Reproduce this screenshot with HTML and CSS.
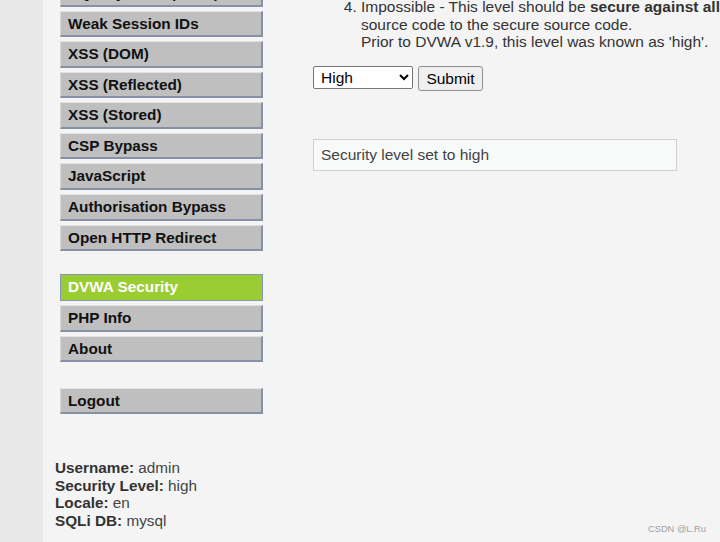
FILE: index.html
```html
<!DOCTYPE html>
<html>
<head>
<meta charset="utf-8">
<link rel="stylesheet" href="styles.css">
</head>
<body>
<div class="page">
  <div class="strip"></div>
  <div class="main">
    <div class="body-row">
      <div class="sidebar">
        <ul class="menu">
          <li><a>SQL Injection (Blind)</a></li>
          <li><a>Weak Session IDs</a></li>
          <li><a>XSS (DOM)</a></li>
          <li><a>XSS (Reflected)</a></li>
          <li><a>XSS (Stored)</a></li>
          <li><a>CSP Bypass</a></li>
          <li><a>JavaScript</a></li>
          <li><a>Authorisation Bypass</a></li>
          <li><a>Open HTTP Redirect</a></li>
        </ul>
        <ul class="menu menu-mid">
          <li class="selected"><a>DVWA Security</a></li>
          <li><a>PHP Info</a></li>
          <li><a>About</a></li>
        </ul>
        <ul class="menu">
          <li><a>Logout</a></li>
        </ul>
      </div>
      <div class="content">
        <ol class="levels" start="4">
          <li>Impossible - This level should be <b>secure against all vulnerabilities</b>. It is used to compare the vulnerable<br>source code to the secure source code.<br>Prior to DVWA v1.9, this level was known as 'high'.</li>
        </ol>
        <form class="sec-form">
          <select class="sel"><option>High</option></select>
          <button type="button" class="btn">Submit</button>
        </form>
        <div class="message">Security level set to high</div>
      </div>
    </div>
    <div class="info">
      <div><b>Username:</b> admin</div>
      <div><b>Security Level:</b> high</div>
      <div><b>Locale:</b> en</div>
      <div><b>SQLi DB:</b> mysql</div>
    </div>
  </div>
</div>
<div class="watermark">CSDN @L.Ru</div>
</body>
</html>
```

FILE: styles.css
```css
html, body {
  margin: 0;
  padding: 0;
  height: 100%;
  overflow: hidden;
}
body {
  font-family: "Liberation Sans", Arial, sans-serif;
  font-size: 15.3px;
  color: #333;
  background: #f4f4f4;
}
.page {
  display: flex;
  min-height: 100vh;
}
.strip {
  width: 43px;
  flex: none;
  background: #e8e8e8;
}
.main {
  flex: 1;
  background: #f4f4f4;
}
.body-row {
  display: flex;
  gap: 50px;
}
.sidebar {
  width: 203px;
  flex: none;
  margin-left: 17px;
  margin-top: -20px;
}
.menu {
  list-style: none;
  margin: 0 0 23.4px 0;
  padding: 0;
}
.menu-mid {
  margin-bottom: 25.4px;
}
.menu:last-child {
  margin-bottom: 0;
}
.menu li a {
  display: block;
  height: 17.57px;
  line-height: 17.57px;
  padding: 3px 8px 3px 7px;
  margin-bottom: 4px;
  background: #bfbfbf;
  border-top: 1px solid #e2e2e2;
  border-left: 1px solid #d6d6d6;
  border-right: 2px solid #8690a8;
  border-bottom: 2px solid #8690a8;
  font-weight: bold;
  color: #111;
  white-space: nowrap;
}
.menu li.selected a {
  background: #9acd32;
  color: #fff;
  border-top-color: #8a96b8;
  border-left-color: #8a96b8;
  border-right-width: 1px;
  border-right-color: #8a96b8;
  border-bottom-width: 1px;
  border-bottom-color: #8a96b8;
  padding-bottom: 4px;
  padding-right: 9px;
}
.content {
  flex: 1;
  min-width: 0;
  margin-top: -1.8px;
  font-size: 15.5px;
}
.levels {
  margin: 0;
  padding-left: 48px;
  white-space: nowrap;
  color: #333;
  line-height: 17.6px;
}
.sec-form {
  display: flex;
  align-items: flex-start;
  gap: 5px;
  margin-top: 15.5px;
}
.sel {
  width: 100px;
  height: 22.5px;
  font-family: inherit;
  font-size: 15.5px;
  color: #000;
  background: #fff;
  border: 1px solid #767676;
  border-radius: 2px;
  padding: 0 0 0 3px;
  margin: 0;
}
.btn {
  width: 65px;
  height: 24.5px;
  font-family: inherit;
  font-size: 15.5px;
  color: #000;
  background: #efefef;
  border: 1px solid #8f8f8f;
  border-radius: 3px;
  padding: 0;
  margin: 0;
}
.message {
  margin-top: 48px;
  width: 348px;
  padding: 6px 7px;
  background: #f8f9f9;
  border: 1px solid #d0d0d0;
  color: #444;
  line-height: 17.6px;
}
.info {
  margin-top: 41px;
  margin-left: 12px;
  color: #444;
  line-height: 17.6px;
}
.info b {
  color: #333;
}
.watermark {
  position: absolute;
  right: 14px;
  bottom: 8px;
  font-size: 9.3px;
  color: #a0a0a0;
  font-family: "Liberation Sans", Arial, sans-serif;
}
```
